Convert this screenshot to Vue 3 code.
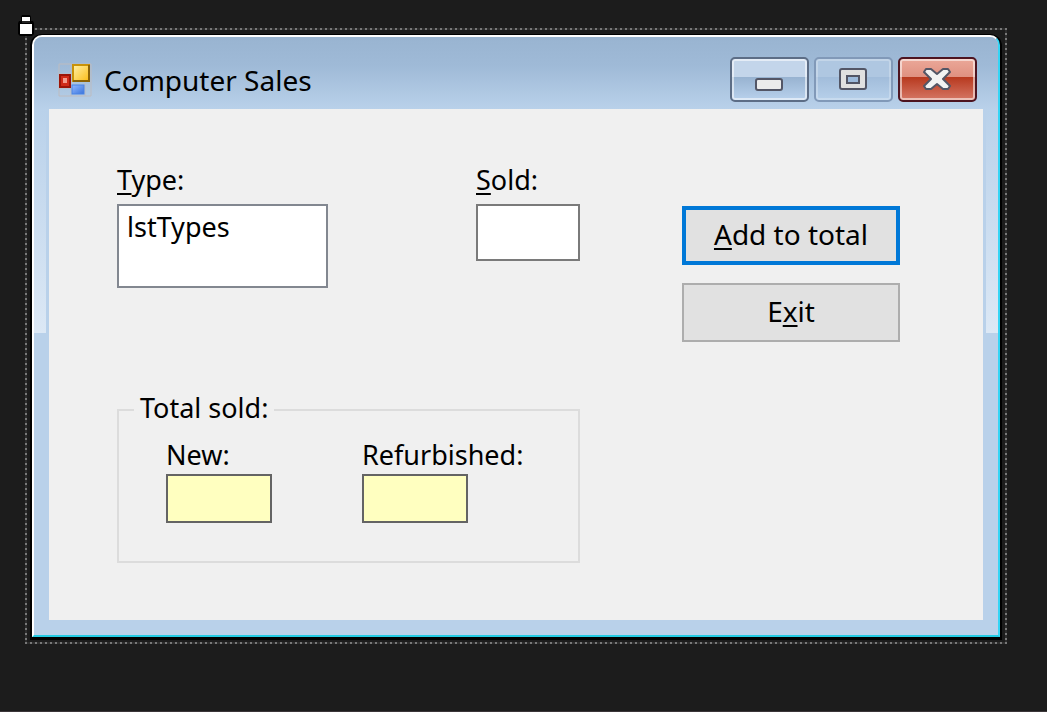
<script setup>
import { ref } from 'vue'

const types = ['lstTypes']
const selectedType = ref('')
const sold = ref('')
const totals = ref([
  { id: 'new', label: 'New:', value: '' },
  { id: 'refurbished', label: 'Refurbished:', value: '' }
])

// Add the sold quantity to the total
const addToTotal = () => {
  const amount = Number(sold.value)
  if (!amount) return
  const total = totals.value[0]
  total.value = Number(total.value) + amount
  sold.value = ''
}

const exit = () => {
  window.close()
}
</script>

<template>
  <main class="designer">
    <div class="selection">
      <!-- lock handle -->
      <svg class="lock" width="18" height="24" viewBox="0 0 18 24">
        <path d="M5 1h8l1 2v4h2l1 2v11l-2 2H3l-2-2V9l1-2h2V3z" fill="#000" />
        <rect x="5" y="3" width="8" height="5" fill="#fff" />
        <rect x="5" y="7" width="8" height="2" fill="#222" />
        <rect x="3" y="10" width="12" height="10" fill="#fff" />
      </svg>

      <section class="window">
        <header class="title-bar">
          <svg class="app-icon" width="34" height="34" viewBox="0 0 34 34">
            <defs>
              <linearGradient id="gold" x1="0" y1="0" x2="1" y2="1">
                <stop offset="0" stop-color="#fff0a8" />
                <stop offset="1" stop-color="#fbbd16" />
              </linearGradient>
              <linearGradient id="blue" x1="0" y1="0" x2="1" y2="1">
                <stop offset="0" stop-color="#8fb8ff" />
                <stop offset="1" stop-color="#3a74dc" />
              </linearGradient>
            </defs>
            <path d="M1 1h32v32H1zM13 1v32M1 11h12M1 25h12M27 20v13" fill="none" stroke="#bdbcc0" stroke-width="1" />
            <rect x="2" y="12" width="10" height="12" fill="#d02a18" stroke="#9c1408" stroke-width="2" />
            <rect x="5" y="15" width="4" height="5" fill="#f39a8c" />
            <rect x="15" y="2" width="16" height="16" fill="url(#gold)" stroke="#c99208" stroke-width="2" />
            <path d="M31 2v16H15" fill="none" stroke="#8c6408" stroke-width="2" />
            <rect x="14" y="22" width="12" height="9" fill="url(#blue)" stroke="#4b83e4" stroke-width="1" />
          </svg>
          <h1 class="title">Computer Sales</h1>
          <div class="caption-buttons">
            <button class="caption" type="button" aria-label="Minimize">
              <svg width="30" height="24" viewBox="0 0 30 24">
                <rect x="1" y="11" width="26" height="11" rx="2" fill="#ececec" stroke="#535666" stroke-width="2" />
              </svg>
            </button>
            <button class="caption maximize" type="button" aria-label="Maximize">
              <svg width="30" height="24" viewBox="0 0 30 24">
                <rect x="1" y="1" width="26" height="20" rx="2" fill="#e0e0e0" stroke="#535666" stroke-width="2" />
                <rect x="8" y="8" width="12" height="7" fill="#9dbadb" stroke="#535666" stroke-width="2" />
              </svg>
            </button>
            <button class="caption close" type="button" aria-label="Close" @click="exit">
              <svg width="30" height="24" viewBox="0 0 30 24">
                <path
                  d="M3 1h5l6 5 6-5h5l2 3-7 7 7 7-2 3h-5l-6-5-6 5H3l-2-3 7-7-7-7z"
                  fill="#f2f2f2"
                  stroke="#535666"
                  stroke-width="2"
                  stroke-linejoin="round"
                />
              </svg>
            </button>
          </div>
        </header>

        <div class="frame">
          <form class="client" @submit.prevent="addToTotal">
            <div class="inputs">
              <div class="field">
                <label for="types"><u>T</u>ype:</label>
                <select id="types" v-model="selectedType" class="list-box" size="2">
                  <option v-for="type in types" :key="type" :value="type">{{ type }}</option>
                </select>
              </div>
              <div class="field">
                <label for="sold"><u>S</u>old:</label>
                <input id="sold" v-model="sold" class="text-box" type="text" />
              </div>
            </div>

            <div class="actions">
              <button class="button default" type="submit"><span><u>A</u>dd to total</span></button>
              <button class="button" type="button" @click="exit"><span>E<u>x</u>it</span></button>
            </div>

            <fieldset class="group">
              <legend>Total sold:</legend>
              <div class="totals">
                <div v-for="total in totals" :key="total.id" class="total">
                  <label :for="total.id">{{ total.label }}</label>
                  <output :id="total.id" class="result">{{ total.value }}</output>
                </div>
              </div>
            </fieldset>
          </form>
        </div>
      </section>
    </div>
  </main>
</template>

<style>
body {
  margin: 0;
  background: #1c1c1c;
}
</style>

<style scoped>
.designer {
  box-sizing: border-box;
  min-height: 100vh;
  padding: 28px 40px 28px 25px;
  border-bottom: 1px solid #3b3639;
  background: #1c1c1c;
  color: #000;
  font-family: 'Noto Sans', 'Open Sans', sans-serif;
  font-size: 28px;
  line-height: 28px;
}

/* dotted selection outline */
.selection {
  position: relative;
  padding: 7px;
  background:
    repeating-linear-gradient(90deg, #787878 0 2px, #2e2e2e 2px 5px) top / 100% 2px no-repeat,
    repeating-linear-gradient(90deg, #787878 0 2px, #2e2e2e 2px 5px) bottom / 100% 2px no-repeat,
    repeating-linear-gradient(#787878 0 2px, #2e2e2e 2px 5px) left / 2px 100% no-repeat,
    repeating-linear-gradient(#787878 0 2px, #2e2e2e 2px 5px) right / 2px 100% no-repeat;
}

.lock {
  position: absolute;
  top: -14px;
  left: -8px;
}

.window {
  border: 2px solid #fff;
  border-right-color: #35d5f5;
  border-bottom-color: #22cbe4;
  border-radius: 10px 10px 0 0;
  background: #b9d1ea;
  box-shadow: 0 1px 0 2px #000;
}

.title-bar {
  display: flex;
  align-items: center;
  box-sizing: border-box;
  height: 72px;
  padding: 13px 21px 0 24px;
  border-radius: 8px 8px 0 0;
  background: linear-gradient(#99b4d1, #9fbad7 40%, #b9d1ea);
}

.app-icon {
  flex-shrink: 0;
}

.title {
  flex: 1;
  margin: 0 0 0 12px;
  font-size: 28px;
  font-weight: 400;
  line-height: 28px;
  white-space: nowrap;
}

.caption-buttons {
  display: flex;
  gap: 5px;
}

.caption {
  display: flex;
  align-items: center;
  justify-content: center;
  width: 79px;
  height: 45px;
  padding: 0;
  border: 2px solid #5c6d86;
  border-radius: 5px;
  background: linear-gradient(#c3d5ea 0 45%, #98b3d1 45%, #b8d1ec);
  box-shadow: inset 0 0 0 2px rgba(255, 255, 255, 0.55);
}

.caption.maximize {
  border-color: #8199b8;
  background: linear-gradient(#afc7e1 0 45%, #a2bddb 45%, #b7d0ea);
  box-shadow: inset 0 0 0 2px rgba(255, 255, 255, 0.25);
}

.caption.close {
  border-color: #4d1420;
  background: linear-gradient(#eba899, #df9080 45%, #b83a20 45%, #d57765);
}

/* lighter strips run down both sides of the frame */
.frame {
  padding: 0 15px 15px;
  background:
    linear-gradient(#b9d1ea, #dce8f5) left top / 12px 224px no-repeat,
    linear-gradient(#b9d1ea, #dce8f5) right top / 12px 224px no-repeat;
}

.client {
  display: grid;
  grid-template-columns: 463fr 218fr;
  column-gap: 102px;
  row-gap: 52px;
  padding: 57px 83px 57px 68px;
  background: #f0f0f0;
  font-size: 27px;
}

.inputs {
  display: flex;
  justify-content: space-between;
  align-items: flex-start;
}

.field {
  display: flex;
  flex-direction: column;
  gap: 10px;
}

u {
  text-decoration-thickness: 2px;
  text-underline-offset: 3px;
  text-decoration-skip-ink: none;
}

.list-box,
.text-box {
  box-sizing: border-box;
  margin: 0;
  border: 2px solid #828790;
  border-radius: 0;
  background: #fff;
  color: #000;
  font: inherit;
  outline: none;
}

.list-box {
  width: 211px;
  height: 84px;
  padding: 2px 0;
  appearance: none;
  overflow: hidden;
}

.list-box option {
  min-height: 28px;
  padding: 0 8px;
  line-height: 28px;
}

.text-box {
  width: 104px;
  height: 57px;
  padding: 0 8px;
  border-color: #7a7a7a;
}

.actions {
  display: flex;
  flex-direction: column;
  gap: 18px;
  padding-top: 40px;
}

.button {
  height: 59px;
  padding: 0 0 3px;
  border: 2px solid #adadad;
  background: #e1e1e1;
  color: #000;
  font: inherit;
  font-size: 28px;
}

.button.default {
  border: 4px solid #0078d7;
}

.group {
  min-width: 0;
  margin: 0;
  padding: 15px 47px 38px;
  border: 2px solid #dcdcdc;
}

.group legend {
  margin-left: -32px;
  padding: 0 6px 4px;
}

.totals {
  display: flex;
  gap: 90px;
}

.total {
  display: flex;
  flex-direction: column;
  gap: 5px;
  width: 106px;
  white-space: nowrap;
}

.result {
  box-sizing: border-box;
  height: 49px;
  padding: 8px;
  border: 2px solid #646464;
  background: #ffffc0;
}
</style>
